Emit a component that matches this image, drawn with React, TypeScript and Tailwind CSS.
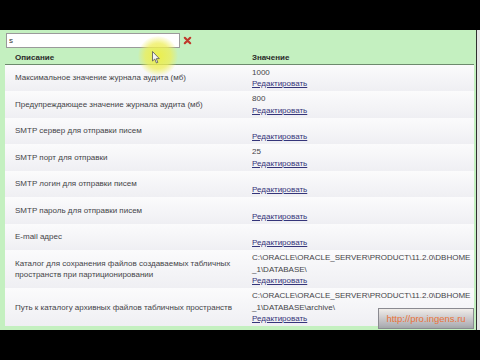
import React from 'react';

type Row = { desc: string[]; value: string[] };

const rows: Row[] = [
  { desc: ['Максимальное значение журнала аудита (мб)'], value: ['1000'] },
  { desc: ['Предупреждающее значение журнала аудита (мб)'], value: ['800'] },
  { desc: ['SMTP сервер для отправки писем'], value: [''] },
  { desc: ['SMTP порт для отправки'], value: ['25'] },
  { desc: ['SMTP логин для отправки писем'], value: [''] },
  { desc: ['SMTP пароль для отправки писем'], value: [''] },
  { desc: ['E-mail адрес'], value: [''] },
  {
    desc: ['Каталог для сохранения файлов создаваемых табличных', 'пространств при партиционировании'],
    value: ['C:\\ORACLE\\ORACLE_SERVER\\PRODUCT\\11.2.0\\DBHOME', '_1\\DATABASE\\'],
  },
  {
    desc: ['Путь к каталогу архивных файлов табличных пространств'],
    value: ['C:\\ORACLE\\ORACLE_SERVER\\PRODUCT\\11.2.0\\DBHOME', '_1\\DATABASE\\archive\\'],
  },
];

const App: React.FC = () => {
  return (
    <div
      className="relative w-[480px] h-[360px] bg-black overflow-hidden text-[8px] leading-[11.5px] text-[#444448]"
      style={{ fontFamily: '"Liberation Sans", Arial, sans-serif' }}
    >
      <div className="h-[30px]" />

      <div className="flex h-[300px]">
        {/* Green frame */}
        <div className="flex-1 flex flex-col bg-[#c4f0c0] pl-[5px] pr-[2px] pb-[4px] overflow-hidden">
          {/* Filter row */}
          <div className="flex items-center pt-[3px] h-[18px]">
            <input
              readOnly
              value="s"
              className="ml-[1px] w-[174px] h-[15px] bg-white border border-[#9a9a9a] px-[2px] text-[8px] text-[#333] outline-none"
            />
            <svg width="9" height="9" viewBox="0 0 10 10" className="ml-[3px]">
              <path d="M2 2 L8 8 M8 2 L2 8" stroke="#c0392b" strokeWidth="2.4" strokeLinecap="round" />
            </svg>
          </div>

          {/* Header */}
          <div className="grid grid-cols-[246px_1fr] h-[17px] pt-[4px] border-b border-[#6d8a6d] items-center text-[#2a2a2a] font-bold">
            <div className="pl-[10px]">Описание</div>
            <div className="pl-[1px]">Значение</div>
          </div>

          {/* Rows */}
          <div className="flex-1 flex flex-col bg-[#f4f4f6]">
            {rows.map((r, i) => (
              <div
                key={i}
                className="grid grid-cols-[246px_1fr] pt-[2px] pb-[1.5px] bg-linear-to-b from-[#fbfbfc] to-[#efeff3]"
              >
                <div className="pl-[10px] flex flex-col justify-center">
                  {r.desc.map((d, j) => (
                    <div key={j} className="whitespace-nowrap">{d}</div>
                  ))}
                </div>
                <div className="pl-[1px] flex flex-col">
                  {r.value.map((v, j) => (
                    <div key={j} className="whitespace-nowrap h-[11.5px]">{v}</div>
                  ))}
                  <a href="#" className="text-[#35357a] underline whitespace-nowrap">
                    Редактировать
                  </a>
                </div>
              </div>
            ))}
          </div>
        </div>
        <div className="w-px bg-[#2f2f2f]" />
        <div className="w-[3px] bg-[#e6e6e6]" />
      </div>

      {/* Cursor highlight */}
      <div className="absolute left-[138px] top-[36px] w-[40px] h-[40px] rounded-full bg-[radial-gradient(circle,rgba(238,238,70,0.95)_0%,rgba(238,238,90,0.75)_45%,rgba(238,238,120,0)_72%)]" />
      <svg className="absolute left-[152px] top-[51px]" width="8" height="13" viewBox="0 0 8 13">
        <path d="M0.5 0.5 L0.5 10 L2.8 8 L4.4 12 L5.8 11.4 L4.3 7.6 L7.3 7.6 Z" fill="#f4f4f4" stroke="#555" strokeWidth="0.8" />
      </svg>

      {/* Watermark */}
      <div className="absolute left-[378px] top-[308px] w-[96px] h-[21px] bg-linear-to-b from-[rgba(240,236,232,0.9)] to-[rgba(160,160,168,0.9)] border border-[#8a8a90] flex items-center justify-center">
        <span className="text-[9.5px] text-[#e8733a]">http://pro.ingens.ru</span>
      </div>
    </div>
  );
};

export default App;
